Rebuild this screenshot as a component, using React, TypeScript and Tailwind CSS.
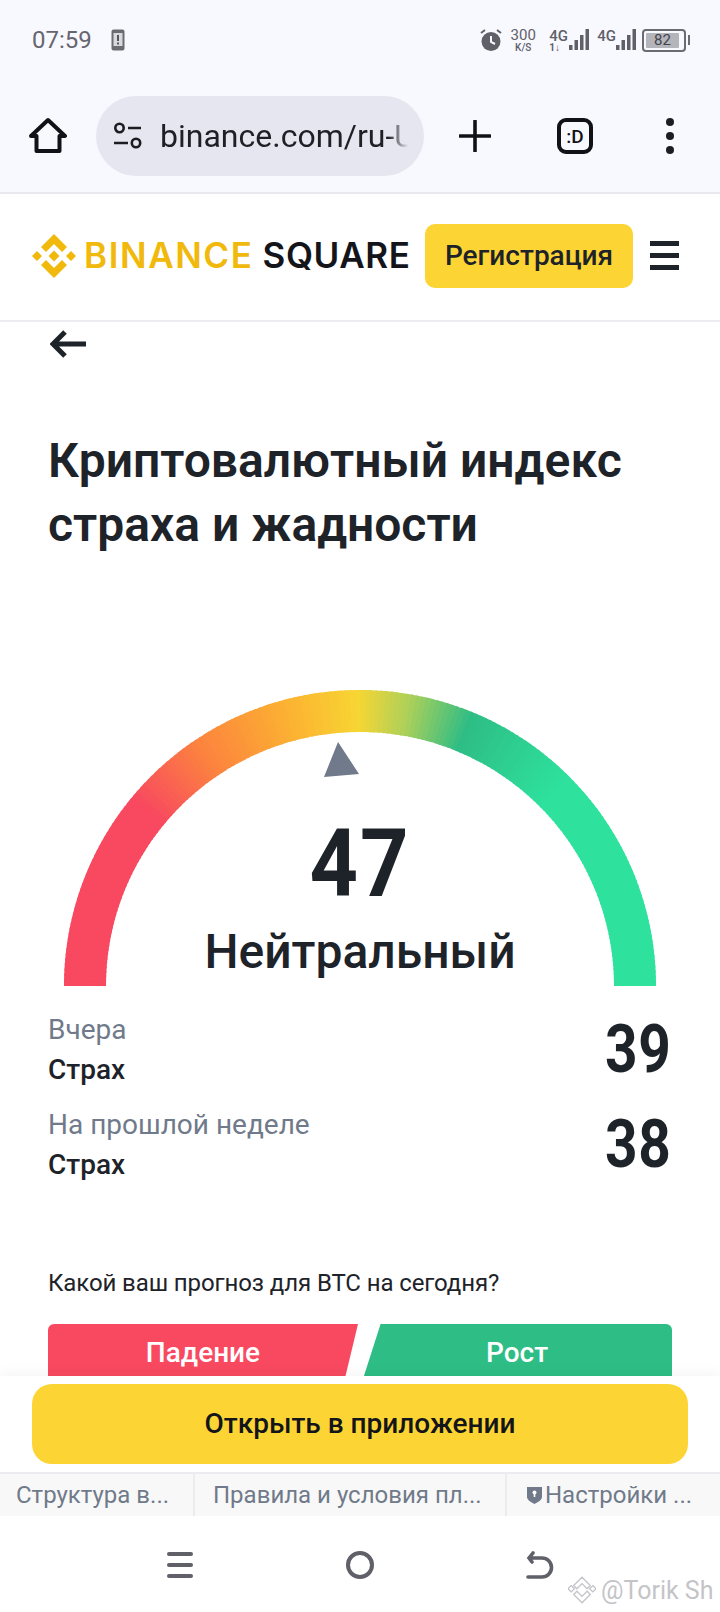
import React from 'react';

// gauge colour stops: degrees from the left end of the arc
const stops: [number, number[]][] = [
  [0, [248, 73, 96]],
  [39, [248, 73, 96]],
  [56, [252, 132, 62]],
  [75, [252, 178, 50]],
  [89, [247, 213, 51]],
  [99, [176, 208, 88]],
  [112, [46, 189, 133]],
  [135, [46, 226, 158]],
  [180, [46, 226, 158]],
];

const colorAt = (deg: number) => {
  for (let i = 1; i < stops.length; i++) {
    const [d0, c0] = stops[i - 1];
    const [d1, c1] = stops[i];
    if (deg <= d1) {
      const t = (deg - d0) / (d1 - d0);
      const c = c0.map((v, k) => Math.round(v + (c1[k] - v) * t));
      return `rgb(${c[0]},${c[1]},${c[2]})`;
    }
  }
  return 'rgb(46,226,158)';
};

const Gauge = () => {
  const cx = 296;
  const cy = 296;
  const r = 275;
  const segments = [];
  for (let d = 0; d < 180; d += 1) {
    const a0 = (Math.PI * d) / 180;
    const a1 = (Math.PI * Math.min(d + 1.4, 180)) / 180;
    const x0 = cx - r * Math.cos(a0);
    const y0 = cy - r * Math.sin(a0);
    const x1 = cx - r * Math.cos(a1);
    const y1 = cy - r * Math.sin(a1);
    segments.push(
      <path key={d} d={`M${x0} ${y0}A${r} ${r} 0 0 1 ${x1} ${y1}`} stroke={colorAt(d)} strokeWidth="42" fill="none" />,
    );
  }
  return (
    <svg width="592" height="296" viewBox="0 0 592 296" className="block">
      {segments}
      <polygon points="274,52 260,87 295,84" fill="#707a8a" />
    </svg>
  );
};

const Bars = () => (
  <svg width="20" height="24" viewBox="0 0 20 24" fill="#5f6068">
    <rect x="0" y="17" width="3.5" height="5" />
    <rect x="5.5" y="12" width="3.5" height="10" />
    <rect x="11" y="7" width="3.5" height="15" />
    <rect x="16.5" y="1" width="3.5" height="21" />
  </svg>
);

const StatusBar = () => (
  <div className="h-[70px] flex items-center justify-between pl-8 pr-[30px] pt-[10px] bg-[#f8f8ff]">
    <div className="flex items-center gap-[19px]">
      <span className="text-[24px] leading-none text-[#66666e] font-['Roboto',sans-serif]">07:59</span>
      <svg width="14" height="22" viewBox="0 0 14 22" fill="none">
        <rect x="0.5" y="0.5" width="13" height="21" rx="2" fill="#6b6b73" />
        <rect x="2.5" y="4" width="9" height="13" fill="#d8d8df" />
        <rect x="6" y="6" width="2" height="6" fill="#55555c" />
        <rect x="6" y="13.5" width="2" height="2" fill="#55555c" />
      </svg>
    </div>
    <div className="flex items-center text-[#5f6068] font-['Roboto',sans-serif]">
      <svg width="24" height="24" viewBox="0 0 24 24" className="mr-[7px]">
        <circle cx="12" cy="13.5" r="9.5" fill="#5f6068" />
        <path d="M12 8v6l4 2" stroke="#f8f8ff" strokeWidth="2" fill="none" />
        <path d="M2 5l4-3M22 5l-4-3" stroke="#5f6068" strokeWidth="2" />
      </svg>
      <div className="flex flex-col items-center w-[26px] mr-[13px]">
        <span className="text-[15px] leading-[15px]">300</span>
        <span className="text-[10px] leading-[10px] font-medium">K/S</span>
      </div>
      <div className="flex flex-col w-[18px] mr-[2px]">
        <span className="text-[15px] leading-[16px] font-medium">4G</span>
        <span className="text-[10px] leading-[8px] font-bold">1↓</span>
      </div>
      <Bars />
      <span className="text-[15px] leading-none font-medium ml-[8px] mb-[8px]">4G</span>
      <Bars />
      <div className="ml-[6px] w-[44px] h-[23px] rounded-[4px] border-2 border-[#6b6b73] p-[2px] flex">
        <div className="w-[33px] h-full bg-[#b4b4bb] rounded-[1px] text-[#44444b] text-[15px] leading-[15px] text-center">82</div>
      </div>
      <div className="ml-[2px] w-[2px] h-[10px] bg-[#6b6b73]" />
    </div>
  </div>
);

const BrowserBar = () => (
  <div className="h-[124px] pt-[10px] flex items-center bg-[#f8f8ff] border-b-2 border-[#e8e8ef] font-['Roboto',sans-serif]">
    <svg width="38" height="38" viewBox="0 0 38 38" fill="none" className="ml-[29px]">
      <path d="M2 19 19 3l17 16h-5.500v15h-23V19z" stroke="#111116" strokeWidth="4" strokeLinejoin="round" />
    </svg>
    <div className="ml-[29px] w-[328px] h-[80px] rounded-full bg-[#e6e6f0] flex items-center pl-[17px]">
      <svg width="30" height="30" viewBox="0 0 30 30" fill="none" stroke="#1c1c22" strokeWidth="2.600">
        <circle cx="6.500" cy="7" r="4.200" />
        <path d="M15 7h13M1 22h14" />
        <circle cx="23" cy="22" r="4.200" />
      </svg>
      <div className="ml-[17px] w-[248px] overflow-hidden whitespace-nowrap text-[32px] text-[#1f1f26] leading-[40px] [mask-image:linear-gradient(to_right,black_92%,transparent)]">binance.com/ru-UA</div>
    </div>
    <svg width="32" height="32" viewBox="0 0 32 32" stroke="#111116" strokeWidth="3.600" strokeLinecap="round" className="ml-[35px]">
      <path d="M16 1v30M1 16h30" />
    </svg>
    <div className="ml-[66px] w-[36px] h-[36px] rounded-[9px] border-[4px] border-[#111116] flex items-center justify-center text-[19px] font-medium leading-none text-[#111116]">:D</div>
    <div className="ml-[73px] flex flex-col gap-[6px]">
      <div className="w-[8px] h-[8px] rounded-full bg-[#1c1c22]" />
      <div className="w-[8px] h-[8px] rounded-full bg-[#1c1c22]" />
      <div className="w-[8px] h-[8px] rounded-full bg-[#1c1c22]" />
    </div>
  </div>
);

const BinanceMark = () => (
  <svg width="44" height="44" viewBox="0 0 44 44" fill="#f0b90b">
    <path d="M22 0l13 13-5 5-8-8-8 8-5-5z" />
    <path d="M22 44L9 31l5-5 8 8 8-8 5 5z" />
    <path d="M5 17l5 5-5 5-5-5zM39 17l5 5-5 5-5-5zM22 16.500l5.500 5.500-5.500 5.500-5.500-5.500z" />
  </svg>
);

const Header = () => (
  <div className="h-[128px] shrink-0 flex items-center bg-white border-b-2 border-[#ebebf0] pl-8 pb-[3px]">
    <BinanceMark />
    <span className="ml-[8px] text-[35px] leading-none font-semibold tracking-[1.6px] text-[#f0b90b] font-['Inter',sans-serif]">BINANCE</span>
    <span className="ml-[9px] text-[35px] leading-none font-semibold tracking-[0.6px] text-[#14151a] font-['Inter',sans-serif]">SQUARE</span>
    <button className="ml-auto w-[208px] h-[64px] rounded-[10px] bg-[#fcd535] text-[28px] font-medium text-[#1e2329] font-['Roboto',sans-serif]">Регистрация</button>
    <div className="ml-[17px] mr-[41px] flex flex-col gap-[7px]">
      <div className="w-[29px] h-[5px] bg-[#1e2329]" />
      <div className="w-[29px] h-[5px] bg-[#1e2329]" />
      <div className="w-[29px] h-[5px] bg-[#1e2329]" />
    </div>
  </div>
);

const StatRow = ({ label, value, num }: { label: string; value: string; num: string }) => (
  <div className="flex items-center justify-between">
    <div>
      <div className="text-[28px] leading-[40px] text-[#707a8a]">{label}</div>
      <div className="text-[28px] leading-[40px] font-medium text-[#1e2329]">{value}</div>
    </div>
    <div className="text-[66px] leading-none font-bold text-[#1e2329] tracking-[1px] origin-right scale-x-[0.86]">{num}</div>
  </div>
);

const BottomSheet = () => (
  <div className="relative shrink-0 bg-white shadow-[0_-4px_12px_rgba(0,0,0,0.04)]">
    <div className="px-8 pt-2 pb-2">
      <button className="w-full h-[80px] rounded-[20px] bg-[#fcd535] text-[28px] font-medium text-[#14151a]">Открыть в приложении</button>
    </div>
    <div className="h-[44px] flex items-center bg-[#f8f8f8] border-t-2 border-[#ebebf0] text-[24px] text-[#707a8a]">
      <div className="w-[195px] h-full pl-4 flex items-center border-r-2 border-[#ebebf0]">Структура в...</div>
      <div className="w-[312px] h-full pl-[18px] flex items-center border-r-2 border-[#ebebf0]">Правила и условия пл...</div>
      <div className="flex-1 h-full pl-5 flex items-center whitespace-nowrap gap-[3px]">
        <svg width="15" height="18" viewBox="0 0 15 18">
          <path d="M0 1h15v10c0 3-4 5-7.500 7C4 16 0 14 0 11z" fill="#707a8a" />
          <circle cx="7.500" cy="6.500" r="2" fill="#fff" />
          <rect x="6.700" y="7" width="1.600" height="4" fill="#fff" />
        </svg>
        <span>Настройки ...</span>
      </div>
    </div>
  </div>
);

const NavBar = () => (
  <div className="relative h-[96px] shrink-0 bg-white flex items-center pt-[2px]">
    <div className="ml-[167px] flex flex-col gap-[7px]">
      <div className="w-[26px] h-[4px] rounded-full bg-[#5f6068]" />
      <div className="w-[26px] h-[4px] rounded-full bg-[#5f6068]" />
      <div className="w-[26px] h-[4px] rounded-full bg-[#5f6068]" />
    </div>
    <div className="ml-[153px] w-[28px] h-[28px] rounded-full border-[4px] border-[#5f6068]" />
    <svg width="28" height="28" viewBox="0 0 28 28" fill="none" stroke="#5f6068" strokeWidth="3.600" strokeLinecap="round" className="ml-[152px]">
      <path d="M2 26h14a9.500 9.500 0 0 0 0-19H3M7 2 3 7l3 4" />
    </svg>
    <div className="absolute left-[568px] top-[60px] flex items-center gap-[5px] text-[25px] leading-none text-[#c4c4c8] whitespace-nowrap">
      <svg width="28" height="28" viewBox="0 0 44 44" fill="none" stroke="#c4c4c8" strokeWidth="2">
        <path d="M22 2l13 13-5 5-8-8-8 8-5-5zM22 42L9 29l5-5 8 8 8-8 5 5zM5 15l5 5-5 5-5-5zM39 15l5 5-5 5-5-5z" />
      </svg>
      <span>@Torik Sh</span>
    </div>
  </div>
);

export default function App() {
  return (
    <div className="w-[720px] h-[1612px] overflow-hidden flex flex-col bg-white font-['Roboto',sans-serif]">
      <StatusBar />
      <BrowserBar />
      <Header />
      <main className="flex-1 min-h-0 overflow-hidden px-12">
        <svg width="36" height="28" viewBox="0 0 36 28" fill="none" stroke="#1e2329" strokeWidth="5" className="mt-2 ml-[2px]">
          <path d="M36 14H4M15 2 3 14l12 12" />
        </svg>
        <h1 className="mt-[71px] text-[48px] leading-[64px] font-semibold text-[#1e2329]">
          Криптовалютный индекс
          <br />
          страха и жадности
        </h1>
        <div className="relative mt-[133px] ml-[16px] w-[592px]">
          <Gauge />
          <div className="absolute inset-x-0 bottom-[4px] flex flex-col items-center text-[#1e2329]">
            <div className="text-[94px] leading-[100px] mb-[8px] font-bold tracking-[2px] scale-x-[0.9]">47</div>
            <div className="text-[48px] leading-[60px] font-medium">Нейтральный</div>
          </div>
        </div>
        <div className="mt-[24px] flex flex-col gap-[15px]">
          <StatRow label="Вчера" value="Страх" num="39" />
          <StatRow label="На прошлой неделе" value="Страх" num="38" />
        </div>
        <p className="mt-[80px] text-[24px] leading-[36px] tracking-[-0.1px] text-[#1e2329]">Какой ваш прогноз для BTC на сегодня?</p>
        <div className="mt-[23px] relative h-[58px] flex text-[28px] font-medium text-white">
          <div className="w-[310px] h-full rounded-tl-[6px] bg-[#f84960] [clip-path:polygon(0_0,100%_0,95.5%_100%,0_100%)] flex items-center justify-center">Падение</div>
          <div className="flex-1 h-full rounded-tr-[6px] bg-[#2ebd85] [clip-path:polygon(6%_0,100%_0,100%_100%,0_100%)] flex items-center justify-center ml-[4px]">Рост</div>
        </div>
      </main>
      <BottomSheet />
      <NavBar />
    </div>
  );
}
